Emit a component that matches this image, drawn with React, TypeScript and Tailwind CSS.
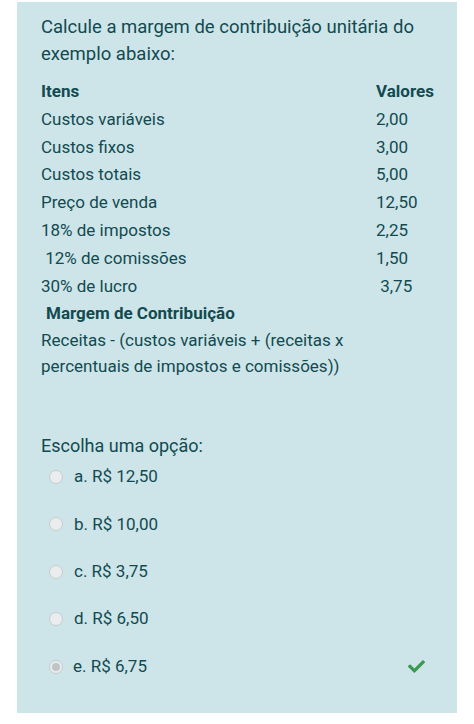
import { FaCheck } from 'react-icons/fa'

const linhas: [string, string][] = [
  ['Custos variáveis', '2,00'],
  ['Custos fixos', '3,00'],
  ['Custos totais', '5,00'],
  ['Preço de venda', '12,50'],
  ['18% de impostos', '2,25'],
  ['\u00a012% de comissões', '1,50'],
  ['30% de lucro', '\u00a03,75'],
]

const opcoes = ['a. R$ 12,50', 'b. R$ 10,00', 'c. R$ 3,75', 'd. R$ 6,50', 'e. R$ 6,75']

export default function App() {
  return (
    <div className="min-h-screen bg-white px-[17px] pt-[2px] text-[#124a50]" style={{ fontFamily: 'Roboto, "Noto Sans", sans-serif' }}>
      <div className="h-[711px] w-[440px] bg-[#cde5e9] px-6 pt-[12px]">
        <p className="text-[18.5px] leading-[27px]">
          Calcule a margem de contribuição unitária do exemplo abaixo:
        </p>

        {/* tabela */}
        <div className="mt-[10px] grid grid-cols-[335px_1fr] text-[17px] leading-[27.8px]">
          <div className="font-bold">Itens</div>
          <div className="font-bold">Valores</div>
          {linhas.map(([item, valor]) => (
            <div key={item} className="contents">
              <div className="whitespace-pre">{item}</div>
              <div className="whitespace-pre">{valor}</div>
            </div>
          ))}
        </div>
        <p className="pl-[5px] text-[17px] font-bold leading-[27px]">Margem de Contribuição</p>
        <p className="text-[17px] leading-[26px]">
          Receitas - (custos variáveis + (receitas x<br />
          percentuais de impostos e comissões))
        </p>

        <p className="mt-[53px] text-[18px] leading-[27px]">Escolha uma opção:</p>
        <div className="-mt-[6px] flex flex-col">
          {opcoes.map((op, i) => {
            const marcada = i === 4
            return (
              <div key={op} className="flex h-[47.4px] items-center">
                <span className="ml-[8px] flex h-[14px] w-[14px] items-center justify-center rounded-full border border-[#c6cdd0] bg-[#eaeced]">
                  {marcada && <span className="h-[8px] w-[8px] rounded-full bg-[#bfc4c7]" />}
                </span>
                <span className={`text-[17px] ${marcada ? 'ml-[10px]' : 'ml-[11px]'}`}>{op}</span>
                {marcada && <FaCheck size={17} className="ml-auto mr-[8px] text-[#3c9a50]" />}
              </div>
            )
          })}
        </div>
      </div>
    </div>
  )
}
